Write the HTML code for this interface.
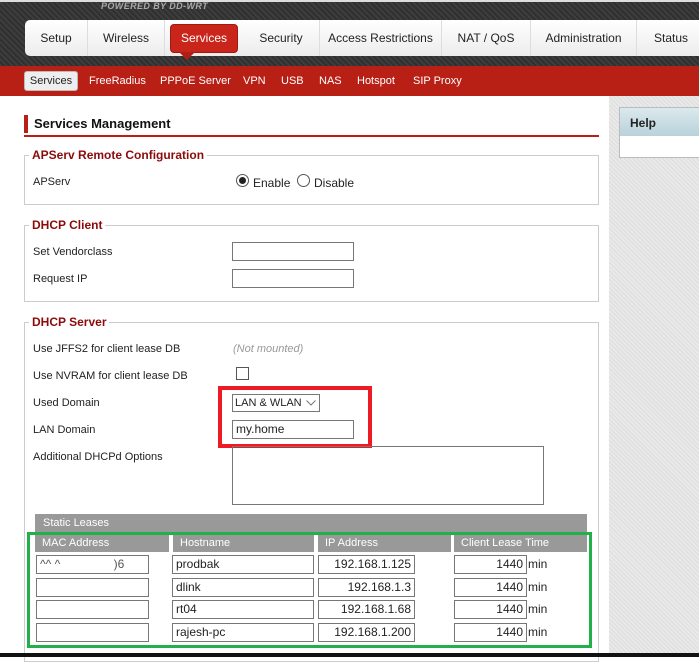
<!DOCTYPE html>
<html><head><style>
*{box-sizing:border-box}
body{margin:0;width:699px;height:657px;overflow:hidden;background:#fff;font-family:"Liberation Sans",sans-serif;font-size:12px;color:#222;position:relative}
.a{position:absolute}
.top{left:0;top:0;width:699px;height:66px;background:repeating-linear-gradient(45deg,#3d3d3d 0 2px,#303030 2px 4px);border-top:2px solid #ddd}
.nav{left:25px;top:20px;width:680px;height:36px;background:linear-gradient(#fff,#ececec);border-radius:5px}
.nav span{position:absolute;top:0;height:36px;line-height:36px;font-size:12px;color:#222;text-align:center;border-right:1px solid #ddd}
.red{left:0;top:66px;width:699px;height:30px;background:#b92015}
.red span{position:absolute;top:0;line-height:30px;color:#fff;font-size:11px}
.side{left:609px;top:96px;width:90px;height:557px;background:repeating-linear-gradient(45deg,#ddd 0 1px,#e9e9e9 1px 3px)}
fieldset{position:absolute;border:1px solid #ccc;margin:0;padding:0}
.lg{position:absolute;background:#fff;color:#8b0b0b;font-weight:bold;font-size:12px;padding:0 3px}
.lb{position:absolute;font-size:11px;color:#222}
.in{position:absolute;border:1px solid #777;background:#fff;height:19px;font-size:12px;line-height:17px;padding:0 3px;white-space:nowrap;overflow:hidden}
.th{position:absolute;background:#999;color:#fff;height:17px;line-height:17px;font-size:11px;padding-left:7px;top:535px}
.r{text-align:right}
.mn{position:absolute;left:528px;font-size:12px}
</style></head><body>
<div class="a top"></div>
<div class="a" style="left:101px;top:1px;color:#aaa;font-size:9px;line-height:10px;font-weight:bold;font-style:italic;letter-spacing:.4px">POWERED BY DD-WRT</div>
<div class="a nav">
<span style="left:0;width:63px">Setup</span>
<span style="left:63px;width:77px">Wireless</span>
<span style="left:218px;width:77px">Security</span>
<span style="left:295px;width:122px">Access Restrictions</span>
<span style="left:417px;width:89px">NAT / QoS</span>
<span style="left:506px;width:106px">Administration</span>
<span style="left:612px;width:68px;border:0">Status</span>
</div>
<div class="a" style="left:170px;top:24px;width:68px;height:29px;background:#c9251a;border:1px solid #a01a10;border-radius:4px;color:#fff;text-align:center;line-height:27px">Services</div>
<div class="a" style="left:179px;top:52px;width:0;height:0;border-left:8px solid transparent;border-right:8px solid transparent;border-top:8px solid #b11e14"></div>
<div class="a red">
<span style="left:24px;top:5px;height:20px;line-height:18px;width:54px;background:#eee;border:1px solid #bbb;border-radius:3px;color:#222;text-align:center">Services</span>
<span style="left:89px">FreeRadius</span><span style="left:160px">PPPoE Server</span><span style="left:243px">VPN</span><span style="left:281px">USB</span><span style="left:319px">NAS</span><span style="left:357px">Hotspot</span><span style="left:413px">SIP Proxy</span>
</div>
<div class="a side"></div>
<div class="a" style="left:619px;top:107px;width:80px;height:51px;border:1px solid #bbb;border-right:0;background:#fff"><div style="height:28px;background:linear-gradient(#dbe9ee,#b9d2da);font-weight:bold;padding:8px 0 0 10px">Help</div></div>
<div class="a" style="left:24px;top:115px;width:4px;height:18px;background:#b92015"></div>
<div class="a" style="left:34px;top:116px;font-size:13px;font-weight:bold;color:#111">Services Management</div>
<div class="a" style="left:24px;top:135px;width:575px;height:2px;background:#b92015"></div>

<fieldset style="left:24px;top:155px;width:575px;height:50px"></fieldset>
<div class="lg" style="left:29px;top:148px">APServ Remote Configuration</div>
<div class="lb" style="left:33px;top:176px">APServ</div>
<div class="a" style="left:236px;top:174px;width:13px;height:13px;border:1px solid #555;border-radius:50%"><div style="margin:2px;width:7px;height:7px;border-radius:50%;background:#222"></div></div>
<div class="lb" style="left:253px;top:176px;font-size:12px">Enable</div>
<div class="a" style="left:297px;top:174px;width:13px;height:13px;border:1px solid #555;border-radius:50%"></div>
<div class="lb" style="left:314px;top:176px;font-size:12px">Disable</div>

<fieldset style="left:24px;top:225px;width:575px;height:77px"></fieldset>
<div class="lg" style="left:29px;top:218px">DHCP Client</div>
<div class="lb" style="left:33px;top:246px">Set Vendorclass</div>
<div class="in" style="left:232px;top:242px;width:122px"></div>
<div class="lb" style="left:33px;top:273px">Request IP</div>
<div class="in" style="left:232px;top:269px;width:122px"></div>

<fieldset style="left:24px;top:322px;width:575px;height:340px"></fieldset>
<div class="lg" style="left:29px;top:315px">DHCP Server</div>
<div class="lb" style="left:33px;top:343px">Use JFFS2 for client lease DB</div>
<div class="lb" style="left:233px;top:343px;color:#999;font-style:italic">(Not mounted)</div>
<div class="lb" style="left:33px;top:370px">Use NVRAM for client lease DB</div>
<div class="a" style="left:236px;top:367px;width:13px;height:13px;border:1px solid #555"></div>
<div class="lb" style="left:33px;top:397px">Used Domain</div>
<div class="in" style="left:232px;top:394px;width:88px;height:18px;line-height:16px;padding:0 2px;font-size:11px">LAN &amp; WLAN</div>
<svg class="a" style="left:306px;top:400px" width="10" height="6"><path d="M0.5 0.5L5 5L9.5 0.5" fill="none" stroke="#777"/></svg>
<div class="lb" style="left:33px;top:424px">LAN Domain</div>
<div class="in" style="left:232px;top:420px;width:122px">my.home</div>
<div class="a" style="left:218px;top:386px;width:154px;height:62px;border:4px solid #ed1c24"></div>
<div class="lb" style="left:33px;top:451px">Additional DHCPd Options</div>
<div class="a" style="left:232px;top:446px;width:312px;height:59px;border:1px solid #777"></div>

<div class="a" style="left:35px;top:514px;width:552px;height:18px;background:#999;color:#fff;font-size:11px;line-height:18px;padding-left:8px">Static Leases</div>
<div class="th" style="left:35px;width:134px">MAC Address</div>
<div class="th" style="left:173px;width:141px">Hostname</div>
<div class="th" style="left:318px;width:133px">IP Address</div>
<div class="th" style="left:454px;width:133px">Client Lease Time</div>

<div class="in" style="left:36px;top:555px;width:113px;color:#555">^^ ^&nbsp;&nbsp;&nbsp;&nbsp;&nbsp;&nbsp;&nbsp;&nbsp;&nbsp;&nbsp;&nbsp;&nbsp;&nbsp;&nbsp;&nbsp;&nbsp;)6</div>
<div class="in" style="left:36px;top:578px;width:113px"></div>
<div class="in" style="left:36px;top:600px;width:113px"></div>
<div class="in" style="left:36px;top:623px;width:113px"></div>
<div class="in" style="left:172px;top:555px;width:142px">prodbak</div>
<div class="in" style="left:172px;top:578px;width:142px">dlink</div>
<div class="in" style="left:172px;top:600px;width:142px">rt04</div>
<div class="in" style="left:172px;top:623px;width:142px">rajesh-pc</div>
<div class="in r" style="left:318px;top:555px;width:97px">192.168.1.125</div>
<div class="in r" style="left:318px;top:578px;width:97px">192.168.1.3</div>
<div class="in r" style="left:318px;top:600px;width:97px">192.168.1.68</div>
<div class="in r" style="left:318px;top:623px;width:97px">192.168.1.200</div>
<div class="in r" style="left:454px;top:555px;width:73px">1440</div><div class="mn" style="top:557px">min</div>
<div class="in r" style="left:454px;top:578px;width:73px">1440</div><div class="mn" style="top:580px">min</div>
<div class="in r" style="left:454px;top:600px;width:73px">1440</div><div class="mn" style="top:602px">min</div>
<div class="in r" style="left:454px;top:623px;width:73px">1440</div><div class="mn" style="top:625px">min</div>
<div class="a" style="left:27px;top:532px;width:565px;height:116px;border:3px solid #22b04b"></div>
<div class="a" style="left:0;top:653px;width:699px;height:4px;background:#111"></div>
</body></html>
